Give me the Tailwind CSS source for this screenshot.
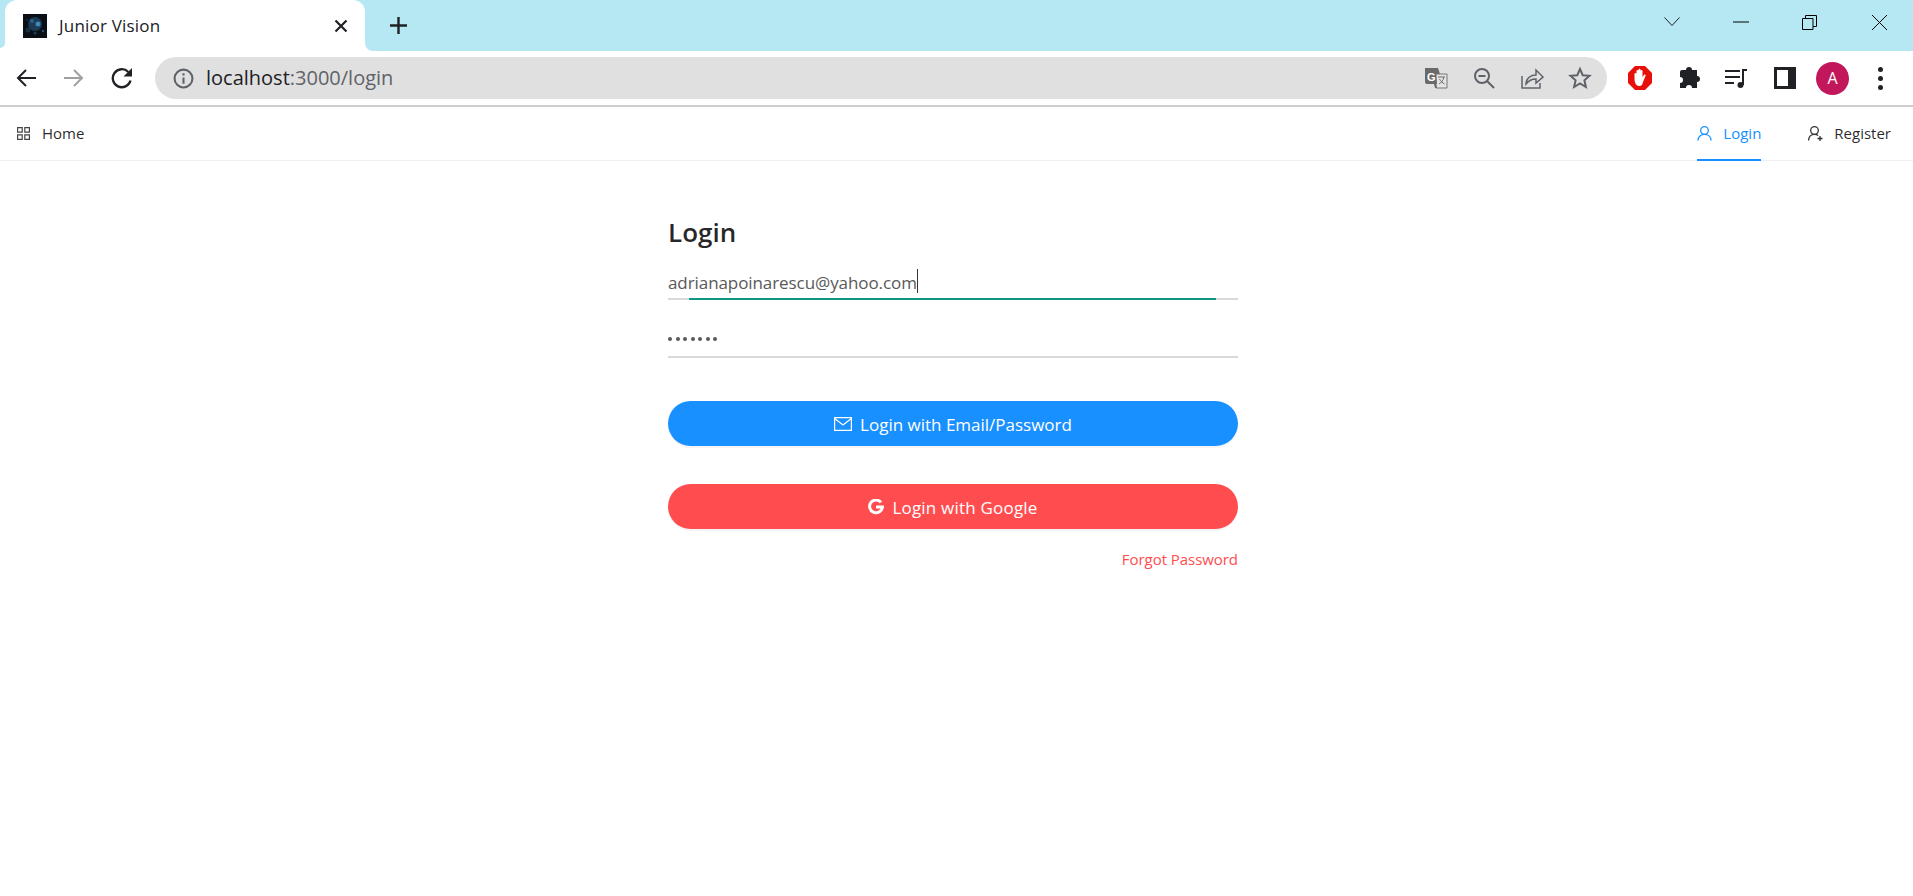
<!DOCTYPE html>
<html lang="en">
<head>
    <meta charset="UTF-8">
    <title>Junior Vision</title>
    <script src="https://cdn.jsdelivr.net/npm/@tailwindcss/browser@4"></script>
</head>
<body class="h-[896px] overflow-hidden bg-white font-['Open_Sans',sans-serif] text-[#000000d9]">

    <!-- tab strip -->
    <div class="flex h-[51px] items-start bg-[#b5e8f3]">
        <div class="relative ml-[5px] flex h-[51px] w-[360px] items-center rounded-t-[12px] bg-white pl-[18px] pr-[17px]">
            <div class="absolute bottom-0 left-[-5px] h-[12px] w-[5px] bg-white"><div class="h-[9px] w-full rounded-br-[5px] bg-[#b5e8f3]"></div></div>
            <div class="absolute bottom-0 right-[-8px] h-[8px] w-[8px] bg-white"><div class="h-full w-full rounded-bl-[8px] bg-[#b5e8f3]"></div></div>
            <svg class="h-6 w-6" viewBox="0 0 24 24"><rect width="24" height="24" fill="#0a0f16"/><circle cx="12" cy="10" r="7" fill="#1b3a55"/><circle cx="15" cy="10" r="2.500" fill="#3f87b5"/><circle cx="9" cy="7" r="2" fill="#2c5f8a"/><circle cx="5" cy="16" r="2.500" fill="#17303f"/><circle cx="12" cy="19" r="1.500" fill="#1c4258"/><circle cx="20" cy="17" r="1" fill="#2f6f8f"/><circle cx="4" cy="6" r="1" fill="#16303f"/></svg>
            <span class="ml-[12px] flex-1 text-[17px] tracking-[0.2px] text-[#202124]">Junior Vision</span>
            <svg class="h-[14px] w-[14px]" viewBox="0 0 14 14" fill="none" stroke="#202124" stroke-width="2.2"><path d="M1.5 1.5l11 11M12.500 1.500l-11 11"/></svg>
        </div>
        <svg class="ml-[25px] mt-[17px] h-[17px] w-[17px]" viewBox="0 0 17 17" fill="none" stroke="#202124" stroke-width="2.4"><path d="M8.500 0v17M0 8.500h17"/></svg>
        <div class="ml-auto flex h-[44px] items-center text-black">
            <svg class="mr-[53px] h-[10px] w-[16px]" viewBox="0 0 16 10" fill="none" stroke="#202124"><path d="M.5.500l7.500 8 7.500-8"/></svg>
            <svg class="mr-[53px] h-[2px] w-[16px]" viewBox="0 0 16 2" fill="none" stroke="#000"><path d="M0 1h16"/></svg>
            <svg class="mr-[55px] h-[15px] w-[15px]" viewBox="0 0 15 15" fill="none" stroke="#000"><path d="M.5 3.500h10.500v11H.5zM3.500 3.500V.5h11v11H11"/></svg>
            <svg class="mr-[26px] h-[15px] w-[15px]" viewBox="0 0 15 15" fill="none" stroke="#000"><path d="M0 0l15 15M15 0L0 15"/></svg>
        </div>
    </div>

    <!-- toolbar -->
    <div class="flex h-[56px] items-center border-b-2 border-[#cdcdcd] bg-white">
        <div class="flex w-[155px] items-center pl-[16px]">
            <svg class="h-5 w-5" viewBox="0 0 20 20" fill="none" stroke="#202124" stroke-width="2"><path d="M20 10H2M10 2l-8 8 8 8"/></svg>
            <svg class="ml-[28px] h-5 w-5" viewBox="0 0 20 20" fill="none" stroke="#a0a0a0" stroke-width="2"><path d="M0 10h18M10 2l8 8-8 8"/></svg>
            <svg class="ml-[27px] h-[22px] w-[22px]" viewBox="0 0 22 22" fill="none" stroke="#202124" stroke-width="2.300"><path d="M19.500 13.500a9 9 0 1 1-2.200-8.500"/><path d="M21 1v8.500h-8.500z" fill="#202124" stroke="none"/></svg>
        </div>
        <div class="flex h-[42px] w-[1452px] items-center rounded-full bg-[#e0e0e0] pl-[18px]">
            <svg class="h-[21px] w-[21px]" viewBox="0 0 20 20" fill="none" stroke="#5f6368" stroke-width="2"><circle cx="10" cy="10" r="8.500"/><path d="M10 9v6M10 5v2.200"/></svg>
            <div class="ml-[12px] text-[20px] text-[#202124]">localhost<span class="text-[#5f6368]">:3000/login</span></div>
            <div class="ml-auto flex items-center gap-[24px] pr-[15px]">
                <svg class="h-6 w-6" viewBox="0 0 24 24"><path d="M12 8h11v14H12z" fill="#e4e4e4" stroke="#777"/><path d="M1 2h13l2 6h-4l1 10H3a2 2 0 0 1-2-2z" fill="#6a6a6a"/><path d="M10 18l1 4h2l-1-4z" fill="#6a6a6a"/><text x="3" y="15" font-size="11" font-weight="700" fill="#fff" font-family="Liberation Sans">G</text><path d="M14 11h7M20 11c-1 4-3 6-5 7M15.500 13c1 2 3 4 5 5" stroke="#6d6d6d" fill="none"/></svg>
                <svg class="h-6 w-6" viewBox="0 0 24 24" fill="none" stroke="#5f6368" stroke-width="2"><circle cx="10" cy="10" r="7"/><path d="M15 15l7 7M6.500 10h7"/></svg>
                <svg class="h-6 w-6" viewBox="0 0 24 24" fill="none" stroke="#5f6368" stroke-width="1.500"><path d="M2 10v12h18v-5"/><path d="M6 18c0-6 5-9 10-9V4l7 7-7 6v-4c-4 0-7 1-10 5z"/></svg>
                <svg class="h-6 w-6" viewBox="0 0 24 24" fill="none" stroke="#5f6368" stroke-width="2"><path d="M12 3l2.700 6.200 6.800.6-5.100 4.500 1.500 6.700-5.900-3.500-5.900 3.500 1.500-6.700-5.100-4.500 6.800-.6z"/></svg>
            </div>
        </div>
        <div class="flex flex-1 items-center pl-[21px]">
            <svg class="h-6 w-6" viewBox="0 0 24 24"><path d="M7 0h10l7 7v10l-7 7H7l-7-7V7z" fill="#e8100b"/><path d="M6.500 12.500V8a1 1 0 0 1 2 0V5a1 1 0 0 1 2 0V3.800a1 1 0 0 1 2 0V5a1 1 0 0 1 2 0v6l1.500-2c.9-1 2.200 0 1.500 1.100l-2.700 6.400C14.700 18.200 13.500 20 11.500 20c-3 0-5-2.500-5-7.500z" fill="#fff"/></svg>
            <svg class="ml-[25px] h-6 w-6" viewBox="0 0 24 24" fill="#202124"><path d="M9 4a3 3 0 0 1 6 0h5v6a3 3 0 0 1 0 6v6h-5a3 3 0 0 0-6 0H3v-5a3 3 0 0 0 0-6V6a2 2 0 0 1 2-2z"/></svg>
            <svg class="ml-[24px] h-6 w-6" viewBox="0 0 24 24" fill="none" stroke="#202124" stroke-width="2"><path d="M0 5h15M0 11h15M0 17h9"/><path d="M22 4h-4v15"/><circle cx="15.500" cy="19" r="3" fill="#202124" stroke="none"/></svg>
            <svg class="ml-[24px] h-6 w-6" viewBox="0 0 24 24"><path d="M1 1h22v22H1z" fill="#202124"/><path d="M4 4h11v16H4z" fill="#fff"/></svg>
            <div class="ml-[19px] flex h-[33px] w-[33px] items-center justify-center rounded-full bg-[#c2185b] text-[16px] text-white">A</div>
            <div class="ml-[29px] flex flex-col gap-[4px]">
                <span class="h-[5px] w-[5px] rounded-full bg-[#202124]"></span>
                <span class="h-[5px] w-[5px] rounded-full bg-[#202124]"></span>
                <span class="h-[5px] w-[5px] rounded-full bg-[#202124]"></span>
            </div>
        </div>
    </div>

    <!-- app nav -->
    <nav class="flex h-[54px] items-center border-b border-[#f0f0f0] text-[15px]">
        <a class="ml-[17px] flex items-center gap-[12px]">
            <svg class="h-[13px] w-[13px]" viewBox="0 0 13 13" fill="none" stroke="#444" stroke-width="1.200"><path d="M.6.6h4.600v4.600H.6zM7.800.6h4.600v4.600H7.800zM.6 7.800h4.600v4.600H.6zM7.800 7.800h4.600v4.600H7.800z"/></svg>
            <span>Home</span>
        </a>
        <a class="relative ml-auto flex h-full items-center gap-[11px] text-[#1890ff] after:absolute after:inset-x-0 after:bottom-[-1px] after:h-[2px] after:bg-[#1890ff]">
            <svg class="h-[15px] w-[15px]" viewBox="0 0 15 15" fill="none" stroke="#1890ff" stroke-width="1.300"><circle cx="7.500" cy="4.500" r="3.800"/><path d="M1 14.500c0-4 3-6.200 6.500-6.200s6.500 2.200 6.500 6.200"/></svg>
            <span>Login</span>
        </a>
        <a class="ml-[47px] mr-[22px] flex items-center gap-[11px]">
            <svg class="h-[15px] w-[15px]" viewBox="0 0 15 15" fill="none" stroke="#333" stroke-width="1.300"><circle cx="6.500" cy="4.500" r="3.800"/><path d="M.6 14.500c0-4 2.500-6.200 5.900-6.200 1.500 0 2.700.4 3.700 1.200M9.500 12.500h5M12 10v5"/></svg>
            <span>Register</span>
        </a>
    </nav>

    <!-- login form -->
    <main class="ml-[668px] mt-[55px] w-[570px]">
        <h1 class="text-[26px] font-semibold leading-[32px] text-[#000000d9]">Login</h1>

        <div class="relative mt-[12px] h-[40px] border-b-2 border-[#d9d9d9]">
            <div class="flex h-full items-center pt-[3px] text-[17px] text-[#595959]">
                <span class="pt-[4px] tracking-[-0.08px]">adrianapoinarescu@yahoo.com</span>
                <span class="h-[24px] w-px bg-[#333]"></span>
            </div>
            <div class="absolute left-[21px] right-[22px] bottom-[-2px] h-[2px] bg-[#0e9686]"></div>
        </div>

        <div class="mt-[16px] flex h-[42px] items-center gap-[3.500px] border-b-2 border-[#d9d9d9] pt-[6px]">
            <span class="h-[4px] w-[4px] rounded-full bg-[#595959]"></span>
            <span class="h-[4px] w-[4px] rounded-full bg-[#595959]"></span>
            <span class="h-[4px] w-[4px] rounded-full bg-[#595959]"></span>
            <span class="h-[4px] w-[4px] rounded-full bg-[#595959]"></span>
            <span class="h-[4px] w-[4px] rounded-full bg-[#595959]"></span>
            <span class="h-[4px] w-[4px] rounded-full bg-[#595959]"></span>
            <span class="h-[4px] w-[4px] rounded-full bg-[#595959]"></span>
        </div>

        <button class="mt-[43px] flex h-[45px] w-full items-center justify-center gap-[8px] rounded-full bg-[#1890ff] text-[17px] text-white shadow-[0_2px_0_rgba(0,0,0,0.045)]">
            <svg class="h-[14px] w-[18px]" viewBox="0 0 18 14" fill="none" stroke="#fff" stroke-width="1.200"><path d="M.6.6h16.800v12.800H.6zM.6 1.500L9 8l8.400-6.500"/></svg>
            <span class="pt-[2px]">Login with Email/Password</span>
        </button>

        <button class="mt-[38px] flex h-[45px] w-full items-center justify-center gap-[8px] rounded-full bg-[#ff4d4f] text-[17px] text-white shadow-[0_2px_0_rgba(0,0,0,0.045)]">
            <svg class="h-[16px] w-[16px]" viewBox="0 0 16 16" fill="none" stroke="#fff" stroke-width="3"><path d="M13 3.400A6.400 6.400 0 1 0 14.400 8H8"/></svg>
            <span class="pt-[2px] tracking-[0.2px]">Login with Google</span>
        </button>

        <div class="mt-[20px] text-right text-[15px] leading-[20px] tracking-[-0.05px] text-[#ff4d4f]">Forgot Password</div>
    </main>
</body>
</html>
